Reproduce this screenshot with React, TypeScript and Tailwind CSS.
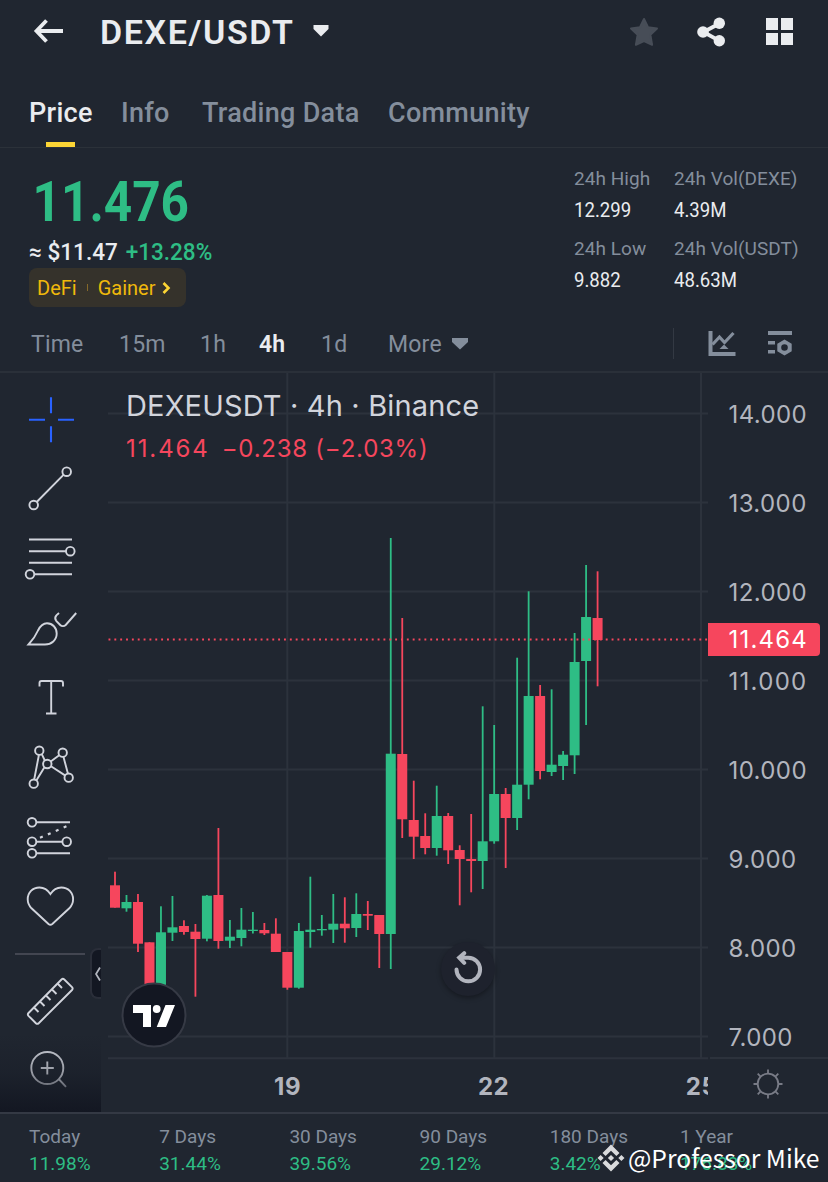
import React from 'react';

type Candle = [up: number, high: number, top: number, bottom: number, low: number];

// 1 = green, 0 = red; the rest are y positions in the pane
const candles: Candle[] = [
  [0, 871.7, 885.3, 907.7, 907.7],
  [1, 895, 902, 908.3, 911.7],
  [0, 894, 902, 943.7, 952],
  [0, 942.3, 942.3, 990, 990],
  [1, 906.3, 932.3, 990, 990],
  [1, 896, 927.3, 932.7, 941],
  [0, 920.3, 926, 932, 934.7],
  [0, 924, 931.7, 939, 996.7],
  [1, 895, 895.7, 938.7, 941.3],
  [0, 828, 895, 941, 948.7],
  [1, 920, 936.7, 940.7, 948],
  [1, 908, 929.7, 938, 946.3],
  [1, 912, 929.7, 931, 933.5],
  [0, 923, 930, 933.3, 935],
  [0, 918.3, 933.7, 952, 952],
  [0, 952, 952, 987.7, 989.7],
  [1, 923, 931, 987.7, 988.7],
  [1, 876.7, 929.7, 932, 947.7],
  [1, 915, 929, 930.3, 935.7],
  [1, 894, 923.7, 929.7, 943],
  [0, 897.3, 923.7, 928.3, 942.7],
  [1, 893.3, 914, 928, 937],
  [0, 901, 914, 915.7, 930],
  [0, 915, 915, 934, 968],
  [1, 538, 753.7, 934, 969],
  [0, 618, 754, 819.3, 838],
  [0, 780.7, 820, 836.7, 859],
  [0, 813.3, 836, 848, 854.3],
  [1, 785.7, 816, 848, 855.7],
  [0, 813, 816, 850.3, 864],
  [0, 845.3, 850, 859, 905.3],
  [0, 814, 859, 861, 892.3],
  [1, 706.3, 841.3, 861, 889],
  [1, 725, 794, 841.3, 843.7],
  [0, 788, 794, 818, 868],
  [1, 657.7, 784.7, 818, 830],
  [1, 591.3, 696, 784.7, 799.3],
  [0, 685, 696, 771, 779.3],
  [1, 689.3, 764.7, 772, 776],
  [1, 751, 754.7, 766, 780],
  [1, 633, 662, 755.3, 774],
  [1, 565, 617, 661, 725],
  [0, 571.3, 618, 640, 686.3],
];

const GREEN = '#2ebd85';
const RED = '#f6465d';
const gridRows = [413.5, 502.5, 591.5, 680.5, 769.5, 858.5, 947.5, 1036.5];
const gridCols = [287.3, 494.3, 701];
const priceLabels = ['14.000', '13.000', '12.000', '11.000', '10.000', '9.000', '8.000', '7.000'];

const performance = [
  { label: 'Today', value: '11.98%' },
  { label: '7 Days', value: '31.44%' },
  { label: '30 Days', value: '39.56%' },
  { label: '90 Days', value: '29.12%' },
  { label: '180 Days', value: '3.42%' },
  { label: '1 Year', value: '176.83%' },
];

function ToolIcon({ children, color = '#d1d4dc' }: { children: React.ReactNode; color?: string }) {
  return (
    <div className="flex h-[69.5px] shrink-0 items-center pl-[23px]">
      <svg width="56" height="56" viewBox="0 0 56 56" fill="none" stroke={color} strokeWidth="1.9">
        {children}
      </svg>
    </div>
  );
}

function Header() {
  return (
    <header className="flex h-[62px] items-center pl-[33px] pr-[35px]">
      <svg width="31" height="26" viewBox="0 0 31 26" fill="none" stroke="#eaecef" strokeWidth="3.8" className="shrink-0">
        <path d="M13.5 2.5 3.5 13 13.5 23.5M3.5 13H30" />
      </svg>
      <h1 className="ml-[36px] w-[193px] whitespace-nowrap pt-px font-['Roboto'] text-[34px] font-semibold leading-none tracking-[1.6px] text-[#eaecef]">
        DEXE/USDT
      </h1>
      <svg width="16" height="12" viewBox="0 0 16 12" className="ml-[20px]" fill="#eaecef">
        <path d="M.5 0h15v4L8 11.5.5 4z" />
      </svg>
      <div className="ml-auto flex items-center pt-px">
        <svg width="30" height="30" viewBox="0 0 30 30" fill="#474d57" stroke="#474d57" strokeWidth="2" strokeLinejoin="round">
          <path d="m15 2 4 8.3 9 1.2-6.6 6.3 1.7 10L15 24.2 6.9 27.8 8.6 17.8 2 11.5l9-1.2z" />
        </svg>
        <svg width="30" height="30" viewBox="0 0 30 30" className="ml-[37px]" fill="#eaecef">
          <path d="M7.5 15 23.5 6.5M7.5 15l16 8.8" stroke="#eaecef" strokeWidth="3.8" />
          <circle cx="7" cy="15" r="5.8" />
          <circle cx="23.3" cy="6.3" r="5.7" />
          <circle cx="23.3" cy="23.7" r="5.7" />
        </svg>
        <svg width="27" height="27" viewBox="0 0 27 27" className="ml-[40px]" fill="#eaecef">
          <path d="M0 0h12v12H0zM15 0h12v12H15zM0 15h12v12H0zM15 15h12v12H15z" />
        </svg>
      </div>
    </header>
  );
}

function Tabs() {
  return (
    <nav className="flex h-[86px] border-b border-[#2b3139] pl-[29px] font-['Roboto'] text-[27px] font-medium leading-[36px] tracking-[0.3px] text-[#848e9c]">
      <div className="flex w-[92px] flex-col pt-[33px] text-[#eaecef]">
        <span className="whitespace-nowrap">Price</span>
        <span className="ml-[17px] mt-auto h-[5px] w-[29px] bg-[#fcd535]" />
      </div>
      <div className="w-[81px] whitespace-nowrap pt-[33px]">Info</div>
      <div className="w-[186px] whitespace-nowrap pt-[33px]">Trading Data</div>
      <div className="whitespace-nowrap pt-[33px]">Community</div>
    </nav>
  );
}

function Stat({ label, value }: { label: string; value: string }) {
  return (
    <div className="h-[70px] whitespace-nowrap font-['Roboto']">
      <div className="text-[19px] leading-[30px] tracking-[0.05px] text-[#848e9c]">{label}</div>
      <div className="origin-left scale-x-[0.93] text-[20px] leading-[32px] text-[#eaecef]">{value}</div>
    </div>
  );
}

function Summary() {
  return (
    <section className="flex h-[167px] justify-between pl-[29px]">
      <div className="flex flex-col items-start pt-[22px] font-['Roboto']">
        <div className="origin-left scale-x-[0.9] pl-[4px] text-[55px] font-bold leading-[64px] text-[#2ebd85]">
          11.476
        </div>
        <div className="flex origin-left scale-x-[0.98] gap-2 whitespace-nowrap pt-[3px] text-[23px] font-medium leading-[32px] text-[#eaecef]">
          <span>≈ $11.47</span>
          <span className="text-[#2ebd85]">+13.28%</span>
        </div>
        <div className="-mt-px flex h-[39px] w-[157px] items-center rounded-lg bg-[#35322b] pl-2 text-[20px] text-[#f0b90b]">
          <span>DeFi</span>
          <span className="ml-[10px] h-[7px] w-px bg-[#85692a]" />
          <span className="ml-[10px]">Gainer</span>
          <svg width="9" height="12" viewBox="0 0 9 12" className="ml-[7px]" fill="none" stroke="#fcd535" strokeWidth="2.6">
            <path d="m1.5 1 5 5-5 5" />
          </svg>
        </div>
      </div>
      <div className="grid w-[254px] grid-cols-[100px_auto] content-start pt-[16px]">
        <Stat label="24h High" value="12.299" />
        <Stat label="24h Vol(DEXE)" value="4.39M" />
        <Stat label="24h Low" value="9.882" />
        <Stat label="24h Vol(USDT)" value="48.63M" />
      </div>
    </section>
  );
}

function Intervals() {
  return (
    <div className="flex h-[58px] items-center border-b-2 border-[#2a3039] pl-[31px] pr-[36px] pt-px text-[#848e9c]">
      <div className="flex pt-1 font-['Roboto'] text-[23px] tracking-[0.2px]">
        <span className="w-[88px]">Time</span>
        <span className="w-[81px]">15m</span>
        <span className="w-[59px]">1h</span>
        <span className="w-[62px] font-semibold text-[#eaecef]">4h</span>
        <span className="w-[67px]">1d</span>
        <span className="w-[52px]">More</span>
      </div>
      <svg width="16" height="12" viewBox="0 0 16 12" className="ml-[12px]" fill="#848e9c">
        <path d="M0 0h16v4L8 11.5 0 4z" />
      </svg>
      <span className="ml-auto h-[31px] w-[1.5px] bg-[#333943]" />
      <svg width="28" height="28" viewBox="0 0 28 28" className="ml-[34px]" fill="none" stroke="#848e9c">
        <path d="M2.5 1v23h25" strokeWidth="4" />
        <path d="m4.5 14.5 7-7.5 5 5.5L25.5 3" strokeWidth="3.2" />
        <path d="m11.5 19 4.500-4.500 4.500 4.500z" fill="#848e9c" stroke="none" />
      </svg>
      <svg width="24" height="25" viewBox="0 0 24 25" className="ml-[32px]" fill="#848e9c">
        <path d="M0 0h24v4H0zM0 10h7v3.5H0zM0 19h7v3.5H0z" />
        <path fillRule="evenodd" d="m16.5 8.5 7.2 4.2v7.6l-7.2 4.2-7.2-4.2v-7.6zm0 4.700a3.300 3.300 0 1 0 0 6.600 3.300 3.300 0 0 0 0-6.600z" />
      </svg>
    </div>
  );
}

function Toolbar() {
  return (
    <aside className="relative flex h-[739px] w-[101px] shrink-0 flex-col pt-[12px]">
      <ToolIcon color="#2962ff">
        <path strokeWidth="2.1" d="M28 5.3v16M28 34.3v16M6 27.7h16M35 27.7h16" />
      </ToolIcon>
      <ToolIcon>
        <path d="m13.7 41 27-27.3" />
        <circle cx="43.7" cy="10.7" r="4.3" />
        <circle cx="10.7" cy="44" r="4.3" />
      </ToolIcon>
      <ToolIcon>
        <path d="M6 8.5h43M6 20.2h37M6 31.7h43M11.5 43.3H49" />
        <circle cx="47.3" cy="20.2" r="4.3" />
        <circle cx="7" cy="43.3" r="4.3" />
      </ToolIcon>
      <ToolIcon>
        <path d="M5.500 44.500C11.500 38 13.500 34 15 30.500 17.500 25.500 20.500 23.300 24 23.300c5.500 0 9.700 4.500 9.700 10.200 0 6.500-5.200 11-11.700 11z" />
        <path d="m36 13-2.600 2.300c-1.500 1.700-1.500 3.700-.2 5.500l4 4.200c1.500 1.600 4 1.500 5.500 0l10.500-12" />
      </ToolIcon>
      <ToolIcon>
        <path d="M16.500 16.500V13a2 2 0 0 1 2-2H38a2 2 0 0 1 2 2v3.500M28.200 11v32.500M23 43.500h10.500" />
      </ToolIcon>
      <ToolIcon>
        <path d="m15.900 16-4.700 24.500M18.800 15.200l3 6.300M21.300 28.500 13.500 41.300M27.700 22.500l8.500-6.200M40.500 18l4.400 16.500M28 27.200l14 9.200" />
        <circle cx="16.3" cy="11.7" r="4.2" />
        <circle cx="39.7" cy="13.7" r="4.2" />
        <circle cx="24.3" cy="25" r="4.2" />
        <circle cx="45.7" cy="38.7" r="4.2" />
        <circle cx="10.7" cy="44.7" r="4.2" />
      </ToolIcon>
      <ToolIcon>
        <path d="M13.500 13.300H47M13.500 32.700h26M13.500 44.300H47" />
        <path d="m17 28.800 27-11.700" strokeDasharray="3 5.6" strokeWidth="2.2" />
        <circle cx="9" cy="13.3" r="4.3" />
        <circle cx="9" cy="32.7" r="4.3" />
        <circle cx="43.7" cy="32.7" r="4.3" />
        <circle cx="9" cy="44.3" r="4.3" />
      </ToolIcon>
      <ToolIcon>
        <path d="M27.400 16C24.800 12 21 9.500 16.500 9.500c-7 0-11.800 5.200-11.800 11.800 0 3.500 1.300 6.400 3.800 9l17 15.700q1.900 1.600 3.800 0l17-15.700c2.500-2.600 3.800-5.500 3.800-9 0-6.600-4.800-11.800-11.800-11.800-4.500 0-8.300 2.500-10.900 6.500z" />
      </ToolIcon>
      <div className="ml-[15px] mt-[11.5px] h-[2px] w-[70px] shrink-0 bg-[#434651]" />
      <div className="pt-[11.5px]">
        <ToolIcon>
          <path d="m38.500 6.500-33 33.500q-1.300 1.400 0 2.800l7.400 7.400q1.400 1.300 2.800 0L49 17q1.300-1.400 0-2.800l-7.700-7.700q-1.400-1.300-2.800 0z" />
          <path d="m11 34.500 4.500 4.500M17 28.500l4.500 4.500M23 22.500l4.500 4.500M29 16.500l4.500 4.500M34.500 10.500 39 15" />
        </ToolIcon>
        <ToolIcon>
          <circle cx="24.3" cy="26" r="16" />
          <path d="M24.300 19.500v13M17.800 26h13M35.700 37l7.300 7.800" />
        </ToolIcon>
      </div>
      <div className="absolute bottom-0 left-0 h-[78px] w-[101px] bg-gradient-to-b from-transparent via-[#131722]/30 to-[#131722]" />
      <div className="absolute left-[89.5px] top-[575px] flex h-[51px] w-[11.5px] items-center justify-end rounded-l-lg border-2 border-r-0 border-[#2a2e39] bg-[#131722]">
        <svg width="6" height="14" viewBox="0 0 6 14" fill="none" stroke="#b2b5be" strokeWidth="1.8">
          <path d="M5 .5 1 7l4 6.5" />
        </svg>
      </div>
    </aside>
  );
}

function Chart() {
  return (
    <div className="relative h-[739px] w-[607px] shrink-0 overflow-hidden">
      <svg width="607" height="739" viewBox="101 373 607 739" className="block">
        <g stroke="#2c323c" strokeWidth="2">
          {gridRows.map((y) => (
            <path key={y} d={`M108 ${y}H708`} />
          ))}
          {gridCols.map((x) => (
            <path key={x} d={`M${x} 373V1058`} />
          ))}
          <path d="M108 1058.3H708" />
        </g>
        {candles.map(([up, high, top, bottom, low], i) => {
          const x = 115 + i * 11.49;
          const color = up ? GREEN : RED;
          return (
            <g key={i} fill={color}>
              <rect x={x - 0.9} y={high} width="1.8" height={low - high} />
              <rect x={x - 5} y={top} width="10" height={bottom - top} />
            </g>
          );
        })}
        <path d="M108.500 639.500H708" stroke={RED} strokeWidth="1.9" strokeDasharray="1.9 3.95" />
      </svg>

      <div className="absolute left-[20px] top-0 w-[384px] whitespace-nowrap pl-[5px] pt-[14px] font-['Inter']">
        <div className="text-[29px] leading-[38px] tracking-[0.15px] text-[#d1d4dc]">DEXEUSDT · 4h · Binance</div>
        <div className="mt-[4px] flex gap-[12px] text-[24px] leading-[40px] text-[#f6465d]">
          <span className="tracking-[1.9px]">11.464</span>
          <span className="tracking-[0.75px]">−0.238 (−2.03%)</span>
        </div>
      </div>

      <svg width="66" height="66" viewBox="0 0 66 66" className="absolute left-[20px] top-[609px]">
        <circle cx="33" cy="33" r="31.5" fill="#131722" stroke="#363a45" strokeWidth="2" />
        <path d="M12 23h18v22h-8V31H12zM44.500 23H54l-9 22h-9.300z" fill="#fff" />
        <circle cx="35.7" cy="27" r="3.9" fill="#fff" />
      </svg>

      <button className="absolute left-[340px] top-[569px] flex size-[54px] items-center justify-center rounded-full bg-[#1e222d] shadow-[0_2px_5px_rgba(0,0,0,0.35)]">
        <svg width="32" height="36" viewBox="0 0 32 36" fill="none" stroke="#b2b5be" strokeWidth="4" strokeLinecap="round">
          <path d="M4.500 18.500A11.800 11.800 0 1 0 16.200 6.700H8" />
          <path d="m12.200 2.200-5 4.500 5 5.200" />
        </svg>
      </button>

      <div className="absolute bottom-0 left-0 flex h-[51px] w-[800px] items-center pl-[136px] font-['Inter'] text-[24px] font-bold tracking-[0.5px] text-[#b2b5be]">
        <span className="w-[101px] text-center">19</span>
        <span className="ml-[105px] w-[101px] text-center">22</span>
        <span className="ml-[107px] w-[101px] text-center">25</span>
      </div>
    </div>
  );
}

function PriceAxis() {
  return (
    <div className="relative flex h-[739px] w-[120px] flex-col">
      <div className="-mt-[2.5px] flex h-[686.5px] flex-col font-['Inter'] text-[24px] text-[#b2b5be]">
        {priceLabels.map((label) => (
          <div
            key={label}
            className={`flex h-[89px] shrink-0 items-center pl-[20.5px] ${
              label.startsWith('11') ? 'tracking-[1.3px]' : 'tracking-[0.4px]'
            }`}
          >
            {label}
          </div>
        ))}
      </div>
      <div className="absolute left-0 top-[250px] flex h-[33px] w-[112px] items-center rounded-r-[4px] bg-[#f6465d] pl-[20.5px] pt-px font-['Inter'] text-[24px] tracking-[1.2px] text-white">
        11.464
      </div>
      <div className="ml-[2px] flex flex-1 items-center border-t-2 border-[#2c323c] bg-[#202630] pb-[3px] pl-[42px]">
        <svg width="32" height="32" viewBox="0 0 32 32" fill="none" stroke="#787b86" strokeWidth="1.8">
          <circle cx="16" cy="16" r="10.3" />
          <path d="M16 1.500v4M16 26.500v4M1.500 16h4M26.500 16h4M5.700 5.700l2.900 2.900M23.400 23.400l2.900 2.900M5.700 26.300l2.900-2.900M23.400 8.600l2.900-2.900" />
        </svg>
      </div>
    </div>
  );
}

function Performance() {
  return (
    <footer className="relative flex h-[70px] border-t-2 border-[#343944] pl-[29px] pt-[10px] font-['Roboto']">
      {performance.map((item) => (
        <div key={item.label} className="w-[130.2px] shrink-0 whitespace-nowrap">
          <div className="text-[19px] leading-[26px] text-[#848e9c]">{item.label}</div>
          <div className="text-[19px] leading-[27px] text-[#2ebd85]">{item.value}</div>
        </div>
      ))}
      <div className="absolute left-[597px] top-[29px] flex items-center whitespace-nowrap font-['Noto_Sans_CJK_SC'] text-[24.7px] leading-[30px] text-white">
        <svg width="28" height="28" viewBox="0 0 28 28" fill="#d9dadc" className="mr-[3px]">
          <path d="m14 .5 8.500 8.500-3.100 3.100L14 6.700l-5.400 5.400L5.500 9zM14 27.500 5.500 19l3.100-3.100 5.400 5.400 5.400-5.400 3.100 3.100zM14 10.900l3.100 3.100-3.100 3.100-3.100-3.100zM3.600 10.900 6.700 14l-3.100 3.100L.5 14zM24.400 10.900l3.100 3.100-3.100 3.100-3.100-3.100z" />
        </svg>
        <span className="-mt-px">@Professor Mike</span>
      </div>
    </footer>
  );
}

export default function App() {
  return (
    <div className="h-[1182px] w-[828px] overflow-hidden bg-[#202630]">
      <Header />
      <Tabs />
      <Summary />
      <Intervals />
      <div className="flex h-[739px]">
        <Toolbar />
        <Chart />
        <PriceAxis />
      </div>
      <Performance />
    </div>
  );
}
